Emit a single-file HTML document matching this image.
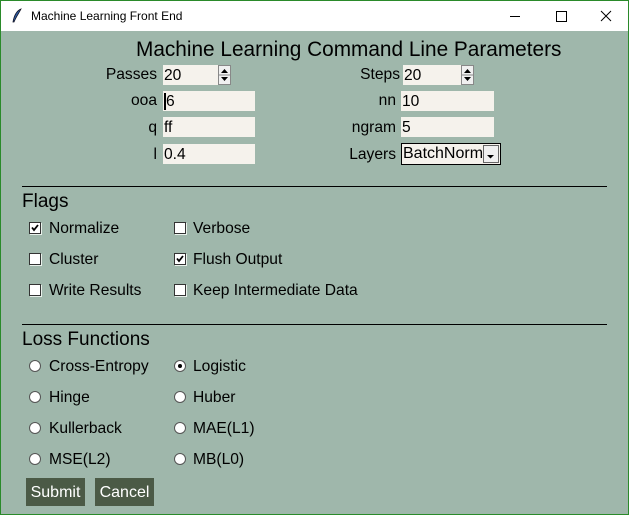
<!DOCTYPE html>
<html><head><meta charset="utf-8"><style>
*{margin:0;padding:0;box-sizing:border-box}
body{width:629px;height:515px;overflow:hidden;background:#9fb7ab;font-family:"Liberation Sans",Arial,sans-serif;position:relative}
svg{display:block}
.win{position:absolute;left:0;top:0;width:629px;height:515px;border:1px solid #2a8a2a}
.tb{position:absolute;left:1px;top:1px;width:627px;height:30px;background:#fff}
.tb .t{position:absolute;left:30px;top:8px;font-size:12px;color:#000}
.a{position:absolute;white-space:nowrap;color:#000}
.l{font-size:15.6px;text-align:right;width:120px}
.e{position:absolute;background:#f5f2ec;font-size:15.6px;padding-left:1px;line-height:21px;height:20px}
.sp{position:absolute;width:13px;height:20px;background:#f0f0f0;border:1px solid #888}
.sep{position:absolute;left:22px;width:585px;height:1px;background:#000}
.h{font-size:19px}
.cb{position:absolute;width:12px;height:12px;background:#fff;border:1px solid #333;box-shadow:1px 1px 0 #e8f0ea}
.rb{position:absolute;width:12px;height:12px;border-radius:50%;background:#fff;border:1px solid #555}
.it{font-size:15.6px}
.btn{position:absolute;background:#4b5a46;color:#fff;font-size:16px;text-align:center;line-height:29px;height:28px}
</style></head><body>
<div class="win"></div>
<div class="tb"><svg style="position:absolute;left:10px;top:7px" width="12" height="16" viewBox="0 0 12 16"><path d="M10 1 C5 3 3 8 2 14 L3 14 C5 9 8 5 10 1Z" fill="#2d5aa0" stroke="#112" stroke-width="0.8"/></svg><span class="t">Machine Learning Front End</span>
<svg style="position:absolute;left:504px;top:8px" width="110" height="14"><line x1="5" y1="7.5" x2="15" y2="7.5" stroke="#000"/><rect x="51.5" y="2.5" width="10" height="10" fill="none" stroke="#000"/><path d="M96 2 L106 12 M106 2 L96 12" stroke="#000"/></svg></div>

<div class="a" style="left:136px;top:38px;font-size:20.8px">Machine Learning Command Line Parameters</div>

<div class="a l" style="left:37px;top:66px">Passes</div>
<div class="e" style="left:163px;top:65px;width:55px">20</div><div class="sp" style="left:218px;top:65px"><svg width="11" height="18"><path d="M2 7 L5.5 3 L9 7Z M2 11 L5.5 15 L9 11Z" fill="#000"/><line x1="0" y1="9" x2="11" y2="9" stroke="#888"/></svg></div>
<div class="a l" style="left:37px;top:92px">ooa</div>
<div class="e" style="left:163px;top:91px;width:92px"><span style="border-left:2px solid #000"></span>6</div>
<div class="a l" style="left:37px;top:119px">q</div>
<div class="e" style="left:163px;top:117px;width:92px">ff</div>
<div class="a l" style="left:37px;top:146px">l</div>
<div class="e" style="left:163px;top:144px;width:92px">0.4</div>

<div class="a l" style="left:280px;top:66px">Steps</div>
<div class="e" style="left:403px;top:65px;width:58px">20</div><div class="sp" style="left:461px;top:65px"><svg width="11" height="18"><path d="M2 7 L5.5 3 L9 7Z M2 11 L5.5 15 L9 11Z" fill="#000"/><line x1="0" y1="9" x2="11" y2="9" stroke="#888"/></svg></div>
<div class="a l" style="left:276px;top:92px">nn</div>
<div class="e" style="left:401px;top:91px;width:93px">10</div>
<div class="a l" style="left:276px;top:119px">ngram</div>
<div class="e" style="left:401px;top:117px;width:93px">5</div>
<div class="a l" style="left:276px;top:146px">Layers</div>
<div class="e" style="left:401px;top:143px;width:100px;height:22px;border:1px solid #000;line-height:20px;font-size:16px">BatchNorm</div>
<div style="position:absolute;left:483px;top:145px;width:16px;height:18px;background:#f0f0f0;border:1px solid #666"><svg width="14" height="16"><path d="M3 9 L10 9 L6.5 12.5Z" fill="#000"/></svg></div>

<div class="sep" style="top:186px"></div>
<div class="a h" style="left:22px;top:191px">Flags</div>
<div class="cb" style="left:29px;top:222px"><svg width="10" height="10"><path d="M2 4.5 L4 7 L8 2" stroke="#000" stroke-width="1.8" fill="none"/></svg></div><div class="a it" style="left:49px;top:220px">Normalize</div>
<div class="cb" style="left:174px;top:222px"></div><div class="a it" style="left:193px;top:220px">Verbose</div>
<div class="cb" style="left:29px;top:253px"></div><div class="a it" style="left:49px;top:251px">Cluster</div>
<div class="cb" style="left:174px;top:253px"><svg width="10" height="10"><path d="M2 4.5 L4 7 L8 2" stroke="#000" stroke-width="1.8" fill="none"/></svg></div><div class="a it" style="left:193px;top:251px">Flush Output</div>
<div class="cb" style="left:29px;top:284px"></div><div class="a it" style="left:49px;top:282px">Write Results</div>
<div class="cb" style="left:174px;top:284px"></div><div class="a it" style="left:193px;top:282px">Keep Intermediate Data</div>

<div class="sep" style="top:324px"></div>
<div class="a h" style="left:22px;top:329px">Loss Functions</div>
<div class="rb" style="left:29px;top:360px"></div><div class="a it" style="left:49px;top:358px">Cross-Entropy</div>
<div class="rb" style="left:174px;top:360px"><div style="position:absolute;left:3px;top:3px;width:4px;height:4px;border-radius:50%;background:#000"></div></div><div class="a it" style="left:193px;top:358px">Logistic</div>
<div class="rb" style="left:29px;top:391px"></div><div class="a it" style="left:49px;top:389px">Hinge</div>
<div class="rb" style="left:174px;top:391px"></div><div class="a it" style="left:193px;top:389px">Huber</div>
<div class="rb" style="left:29px;top:422px"></div><div class="a it" style="left:49px;top:420px">Kullerback</div>
<div class="rb" style="left:174px;top:422px"></div><div class="a it" style="left:193px;top:420px">MAE(L1)</div>
<div class="rb" style="left:29px;top:453px"></div><div class="a it" style="left:49px;top:451px">MSE(L2)</div>
<div class="rb" style="left:174px;top:453px"></div><div class="a it" style="left:193px;top:451px">MB(L0)</div>

<div class="btn" style="left:26px;top:478px;width:59px">Submit</div>
<div class="btn" style="left:95px;top:478px;width:59px">Cancel</div>
</body></html>
